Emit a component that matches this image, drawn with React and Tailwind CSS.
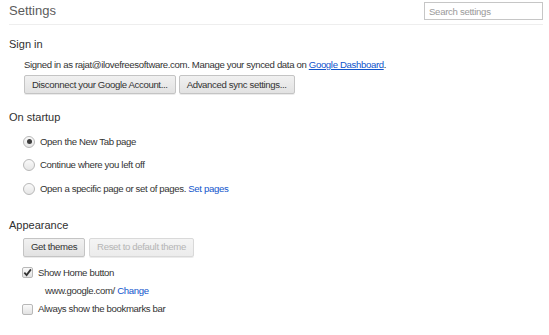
import { useState } from 'react';

const font = { fontFamily: '"Liberation Sans", Arial, sans-serif' };

const Button = ({ children, disabled }) => (
  <button
    disabled={disabled}
    className={
      'h-[19px] rounded-[2px] border px-[7px] text-[9.6px] tracking-[-0.35px] leading-none shadow-[0_1px_0_rgba(0,0,0,0.08)] bg-gradient-to-b ' +
      (disabled
        ? 'border-[#d9d9d9] from-[#f4f4f4] to-[#ececec] text-[#b5b5b5]'
        : 'border-[#c4c4c4] from-[#f1f1f1] to-[#e2e2e2] text-[#333]')
    }
  >
    {children}
  </button>
);

const Radio = ({ checked, children }) => (
  <label className="flex h-[23.5px] items-center gap-[5px]">
    <span className="flex h-[12px] w-[12px] items-center justify-center rounded-full border border-[#b8b8b8] bg-gradient-to-b from-[#fafafa] to-[#e6e6e6]">
      {checked && <span className="h-[5px] w-[5px] rounded-full bg-[#3c3c3c]" />}
    </span>
    <span>{children}</span>
  </label>
);

const Checkbox = ({ checked, children }) => (
  <label className="flex items-center gap-[5px]">
    <span className="flex h-[11px] w-[11px] items-center justify-center rounded-[2px] border border-[#b8b8b8] bg-gradient-to-b from-[#fafafa] to-[#e2e2e2]">
      {checked && (
        <svg width="9" height="9" viewBox="0 0 10 10">
          <path d="M1.5 5.2 L4 7.8 L8.8 1.5" fill="none" stroke="#333" strokeWidth="2" />
        </svg>
      )}
    </span>
    <span>{children}</span>
  </label>
);

export default function App() {
  const [query, setQuery] = useState('');

  return (
    <div className="h-[335px] w-[549px] overflow-hidden bg-white pl-[9px] pr-[6px] text-[9.6px] tracking-[-0.35px] text-[#333]" style={font}>
      <div className="flex h-[25px] items-start justify-between border-b border-[#eeeeee] tracking-normal">
        <h1 className="mt-[2px] text-[13px] leading-[18px] text-[#5c5c5c]">Settings</h1>
        <input
          value={query}
          onChange={(e) => setQuery(e.target.value)}
          placeholder="Search settings"
          className="mt-[2px] h-[18px] w-[119px] border border-[#c6c6c6] px-[4px] text-[9.6px] tracking-[-0.3px] placeholder:text-[#9a9a9a] focus:outline-none"
        />
      </div>

      <section className="pt-[10px]">
        <h3 className="text-[11px] leading-[18px] tracking-normal text-[#303030]">Sign in</h3>
        <div className="pl-[15px]">
          <p className="mt-[5px] leading-[14px]">
            Signed in as rajat@ilovefreesoftware.com. Manage your synced data on{' '}
            <a href="#" className="text-[#1155cc] underline">Google Dashboard</a>.
          </p>
          <div className="mt-[3px] flex gap-[3px]">
            <Button>Disconnect your Google Account...</Button>
            <Button>Advanced sync settings...</Button>
          </div>
        </div>
      </section>

      <section className="pt-[14px]">
        <h3 className="text-[11px] leading-[18px] tracking-normal text-[#303030]">On startup</h3>
        <div className="mt-[4px] pl-[14px]">
          <Radio checked>Open the New Tab page</Radio>
          <Radio>Continue where you left off</Radio>
          <Radio>
            Open a specific page or set of pages. <a href="#" className="text-[#1155cc]">Set pages</a>
          </Radio>
        </div>
      </section>

      <section className="pt-[15px]">
        <h3 className="text-[11px] leading-[18px] tracking-normal text-[#303030]">Appearance</h3>
        <div className="pl-[13px]">
          <div className="mt-[4px] flex gap-[4px] pl-[1px]">
            <Button>Get themes</Button>
            <Button disabled>Reset to default theme</Button>
          </div>
          <div className="mt-[9px]">
            <Checkbox checked>Show Home button</Checkbox>
          </div>
          <p className="mt-[4px] pl-[23px] leading-[14px]">
            www.google.com/ <a href="#" className="text-[#1155cc]">Change</a>
          </p>
          <div className="mt-[4px]">
            <Checkbox>Always show the bookmarks bar</Checkbox>
          </div>
        </div>
      </section>
    </div>
  );
}
